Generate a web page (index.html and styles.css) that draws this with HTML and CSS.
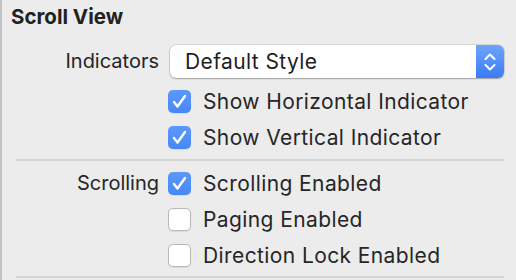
FILE: index.html
```html
<!DOCTYPE html>
<html>
<head>
<meta charset="utf-8">
<link rel="stylesheet" href="styles.css">
</head>
<body>
<div class="panel">
  <h1 class="title">Scroll View</h1>
  <div class="form">
    <div class="label label-popup">Indicators</div>
    <div class="popup">
      <span class="popup-text">Default Style</span>
      <span class="popup-arrows">
        <svg width="12" height="22" viewBox="0 0 12 22"><path d="M1.5 8 L6 3.5 L10.5 8 M1.5 14 L6 18.5 L10.5 14" fill="none" stroke="#fff" stroke-width="2" stroke-linecap="round" stroke-linejoin="round"/></svg>
      </span>
    </div>
    <div class="label"></div>
    <div class="check-row"><span class="box on"><svg width="23" height="23" viewBox="0 0 23 23"><path d="M6 12 L9.5 16.5 L17 6" fill="none" stroke="#fff" stroke-width="2.4" stroke-linecap="round" stroke-linejoin="round"/></svg></span><span class="check-text">Show Horizontal Indicator</span></div>
    <div class="label"></div>
    <div class="check-row"><span class="box on"><svg width="23" height="23" viewBox="0 0 23 23"><path d="M6 12 L9.5 16.5 L17 6" fill="none" stroke="#fff" stroke-width="2.4" stroke-linecap="round" stroke-linejoin="round"/></svg></span><span class="check-text">Show Vertical Indicator</span></div>
  </div>
  <div class="sep sep-top"></div>
  <div class="form">
    <div class="label">Scrolling</div>
    <div class="check-row"><span class="box on"><svg width="23" height="23" viewBox="0 0 23 23"><path d="M6 12 L9.5 16.5 L17 6" fill="none" stroke="#fff" stroke-width="2.4" stroke-linecap="round" stroke-linejoin="round"/></svg></span><span class="check-text">Scrolling Enabled</span></div>
    <div class="label"></div>
    <div class="check-row"><span class="box"></span><span class="check-text">Paging Enabled</span></div>
    <div class="label"></div>
    <div class="check-row"><span class="box"></span><span class="check-text">Direction Lock Enabled</span></div>
  </div>
  <div class="sep sep-bottom"></div>
</div>
</body>
</html>
```
FILE: styles.css
```css
html, body {
  margin: 0;
  padding: 0;
  background: #ececec;
}
body {
  width: 516px;
  height: 280px;
  overflow: hidden;
  font-family: Inter, "Liberation Sans", Arial, sans-serif;
  color: #262626;
}
.panel {
  border-left: 2px solid #c2c2c2;
  height: 280px;
  box-sizing: border-box;
}
.title {
  margin: 0;
  padding: 5px 0 0 9px;
  font-size: 20.5px;
  font-weight: bold;
  line-height: 24px;
  height: 40px;
  box-sizing: border-box;
  color: #222;
}
.form {
  display: grid;
  grid-template-columns: 157px 1fr;
  column-gap: 9px;
  padding-right: 12px;
}
.form .label {
  text-align: right;
  font-size: 20px;
  line-height: 36px;
}
.form .label-popup {
  line-height: 43px;
}
.popup {
  margin: 5px 0 5px 2px;
  height: 33px;
  box-sizing: border-box;
  background: #fff;
  border-radius: 6px;
  box-shadow: 0 0 0 0.5px rgba(0,0,0,0.18), 0 1px 1.5px rgba(0,0,0,0.25);
  display: flex;
  align-items: center;
  overflow: hidden;
}
.popup-text {
  flex: 1;
  padding-left: 15px;
  font-size: 21px;
  letter-spacing: 0.4px;
  color: #1e1e1e;
}
.popup-arrows {
  width: 28px;
  height: 100%;
  background: linear-gradient(#6ea5fa, #3a7bf6);
  display: flex;
  align-items: center;
  justify-content: center;
}
.check-row {
  display: flex;
  align-items: center;
  height: 36px;
}
.box {
  width: 23px;
  height: 23px;
  box-sizing: border-box;
  border-radius: 5px;
  background: #fff;
  border: 1px solid #b8b8b8;
  box-shadow: 0 0.5px 1px rgba(0,0,0,0.08);
  display: inline-flex;
  flex: none;
}
.box.on {
  background: linear-gradient(#5c98f8, #4588f6);
  border: none;
}
.check-text {
  margin-left: 12px;
  font-size: 21px;
  letter-spacing: 0.4px;
}
.sep {
  height: 2px;
  background: #d5d5d5;
  margin: 0 12px 0 14px;
}
.sep-top {
  margin-top: 4px;
  margin-bottom: 4px;
}
.sep-bottom {
  margin-top: 3px;
}
```
